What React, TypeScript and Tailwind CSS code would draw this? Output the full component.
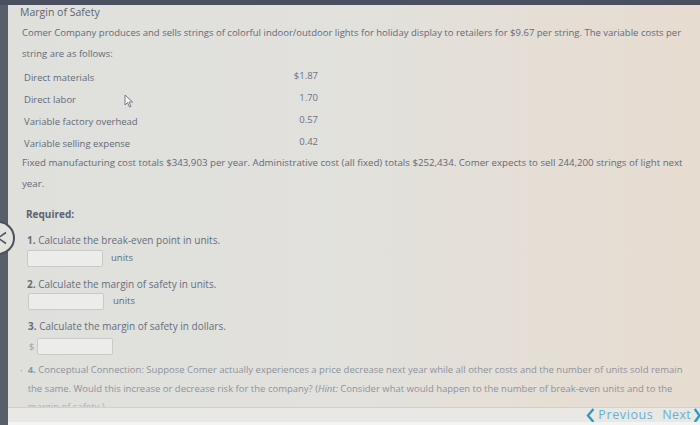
import React from "react";

const costs = [
  { label: "Direct materials", value: "$1.87" },
  { label: "Direct labor", value: "1.70" },
  { label: "Variable factory overhead", value: "0.57" },
  { label: "Variable selling expense", value: "0.42" },
];

function AnswerBox({ className = "" }: { className?: string }) {
  return <div className={"h-[17px] w-[76px] rounded-[2px] border border-[#c9c9c6] bg-[#ececea] " + className} />;
}

function Question({ n, text }: { n: string; text: string }) {
  return (
    <div className="text-[10px] leading-[16px] text-[#666e7c]">
      <span className="font-bold">{n}.</span> {text}
    </div>
  );
}

export default function App() {
  return (
    <div
      className="relative flex h-[425px] w-[700px] flex-col overflow-hidden bg-linear-to-r from-[#dfe0dc] via-[#e2e1dc] to-[#e7dcd0] text-[#626a79]"
      style={{ fontFamily: '"Open Sans", "DejaVu Sans", sans-serif' }}
    >
      <div className="h-[5px] shrink-0 bg-[#4b5061]" />
      <div className="flex min-h-0 flex-1">
        <div className="w-[8px] shrink-0 bg-[#595e6b]" />
        <div className="flex min-w-0 flex-1 flex-col">
          {/* scrolling question area */}
          <div className="h-[403px] overflow-hidden border-b border-[#cfd0d2] pl-[12px]">
            <div className="text-[10.5px] leading-[14px] text-[#5b6372]">Margin of Safety</div>

            <p className="mt-[3px] pl-[2px] pr-[10px] text-[9.5px] leading-[21px]">
              Comer Company produces and sells strings of colorful indoor/outdoor lights for holiday display to retailers for $9.67 per string. The variable costs per string are as follows:
            </p>

            <div className="mt-[3px] w-[298px] pl-[4px] text-[9.5px]">
              {costs.map((c) => (
                <div key={c.label} className="flex h-[22px] items-center justify-between">
                  <span>{c.label}</span>
                  <span className="mb-[4px] text-[#6b7385]">{c.value}</span>
                </div>
              ))}
            </div>

            <p className="-mt-[3px] pl-[2px] pr-[10px] text-[9.7px] leading-[21px]">
              Fixed manufacturing cost totals $343,903 per year. Administrative cost (all fixed) totals $252,434. Comer expects to sell 244,200 strings of light next year.
            </p>

            <div className="mt-[12px] pl-[6px] text-[10px] font-bold leading-[16px] text-[#5b6372]">Required:</div>

            <div className="mt-[10px] pl-[7px]">
              <Question n="1" text="Calculate the break-even point in units." />
              <div className="mt-[2px] flex items-center gap-[8px]">
                <AnswerBox />
                <span className="text-[9.5px]">units</span>
              </div>
            </div>

            <div className="mt-[9px] pl-[7px]">
              <Question n="2" text="Calculate the margin of safety in units." />
              <div className="mt-[1px] flex items-center gap-[9px] pl-[1px]">
                <AnswerBox />
                <span className="text-[9.5px]">units</span>
              </div>
            </div>

            <div className="mt-[8px] pl-[8px]">
              <Question n="3" text="Calculate the margin of safety in dollars." />
              <div className="mt-[4px] flex items-center gap-[3px] pl-[1px]">
                <span className="text-[9px] leading-[12px] text-[#9a9ea6]">$</span>
                <AnswerBox />
              </div>
            </div>

            <div className="mt-[6px] flex items-start gap-[5px] pr-[14px]">
              <span className="text-[10px] leading-[18px] text-[#9aa0a8]">·</span>
              <p className="text-[9.5px] leading-[18.5px] text-[#8d939d]">
                <b>4.</b> Conceptual Connection: Suppose Comer actually experiences a price decrease next year while all other costs and the number of units sold remain the same. Would this increase or decrease risk for the company? (<i>Hint:</i> Consider what would happen to the number of break-even units and to the <span className="text-[#aeb2b8]">margin of safety.)</span>
              </p>
            </div>
          </div>

          {/* footer navigation */}
          <div className="flex h-[14px] items-center justify-end bg-[#e9e8e4] text-[12.5px] text-[#66b2d1]">
            <span className="flex items-center gap-[3px]">
              <svg width="9" height="15" viewBox="0 0 9 15" className="text-[#2a9cc6]">
                <path d="M7.5 1 L2 7.5 L7.5 14" fill="none" stroke="currentColor" strokeWidth="2.4" />
              </svg>
              <span className="tracking-[0.6px]">Previous</span>
            </span>
            <span className="ml-[9px] tracking-[0.3px]">Next</span>
            <svg width="6" height="15" viewBox="0 0 6 15" className="ml-[3px] text-[#2a9cc6]">
              <path d="M0.8 1 L5.5 7.5 L0.8 14" fill="none" stroke="currentColor" strokeWidth="2.4" />
            </svg>
          </div>
          <div className="h-[3px] bg-[#f4f4f2]" />
        </div>
      </div>

      {/* left side back button */}
      <div className="absolute left-[-19px] top-[221px] flex h-[34px] w-[34px] items-center justify-end rounded-full border-2 border-[#4c515d] bg-[#e2e2de] pr-[5px]">
        <svg width="12" height="14" viewBox="0 0 12 14">
          <path d="M10 1.5 L2 7 L10 12.5" fill="none" stroke="#4c515d" strokeWidth="1.6" />
        </svg>
      </div>

      {/* mouse cursor */}
      <svg className="absolute left-[124px] top-[94px]" width="10" height="14" viewBox="0 0 10 14">
        <path d="M1 1 L1 11 L3.5 8.7 L5.5 13 L7 12.3 L5 8 L8.5 8 Z" fill="#f4f4f2" stroke="#6a707c" strokeWidth="0.9" strokeLinejoin="round" />
      </svg>
    </div>
  );
}
